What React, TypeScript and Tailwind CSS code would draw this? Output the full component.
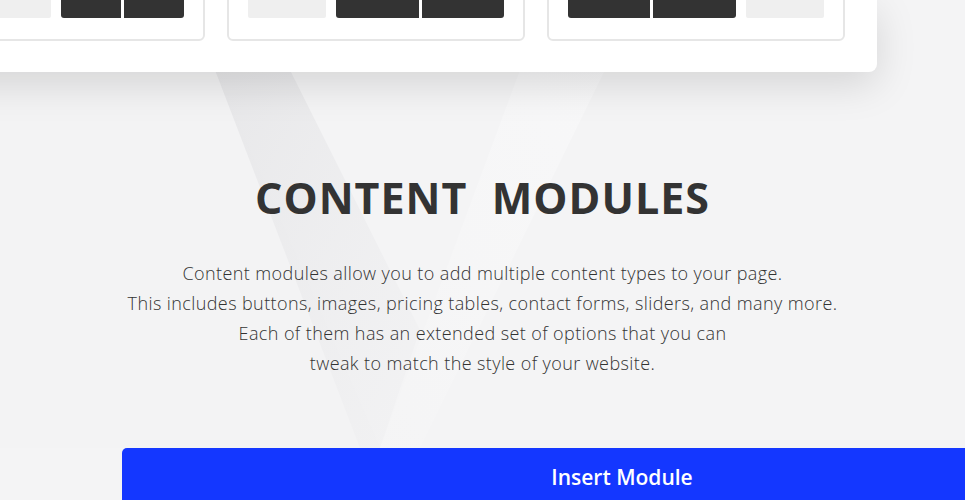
const cards = [
  { blocks: [["light", 123], ["dark", 60], ["dark", 60]] },
  { blocks: [["light", 78], ["dark", 83], ["dark", 82]] },
  { blocks: [["dark", 82], ["dark", 83], ["light", 78]] },
] as const;

function Card({ blocks }: { blocks: readonly (readonly [string, number])[] }) {
  return (
    <div className="flex h-[120px] w-[298px] items-end rounded-md border-2 border-[#e6e6e6] bg-white px-[19px] pb-[21px]">
      {blocks.map(([kind, w], i) => {
        const next = blocks[i + 1];
        const pairGap = next && kind === "dark" && next[0] === "dark" ? "mr-[3px]" : next ? "mr-[10px]" : "";
        return (
          <div
            key={i}
            style={{ width: w }}
            className={
              kind === "dark"
                ? `h-10 bg-[#333333] ${pairGap} ${blocks[i - 1]?.[0] === "dark" ? "rounded-br-[3px]" : "rounded-bl-[3px]"}`
                : `h-10 rounded-[2px] bg-[#efefef] ${pairGap}`
            }
          />
        );
      })}
    </div>
  );
}

// soft "V" shapes behind the section text
function Backdrop() {
  return (
    <svg className="pointer-events-none absolute inset-0 h-full w-full" viewBox="0 0 965 500" preserveAspectRatio="none">
      <defs>
        <linearGradient id="fadeL" x1="0" y1="0" x2="1" y2="1">
          <stop offset="0" stopColor="#e4e4e6" stopOpacity="0.8" />
          <stop offset="1" stopColor="#ebebed" stopOpacity="0.2" />
        </linearGradient>
        <linearGradient id="fadeR" x1="1" y1="0" x2="0" y2="1">
          <stop offset="0" stopColor="#f9f9fa" stopOpacity="0.7" />
          <stop offset="1" stopColor="#fafafa" stopOpacity="0.1" />
        </linearGradient>
      </defs>
      <polygon points="0,70 215,70 380,448 0,448" fill="#f2f2f3" opacity="0.6" />
      <polygon points="215,70 290,70 420,330 380,448 360,448" fill="url(#fadeL)" />
      <polygon points="520,70 605,70 420,448 380,448" fill="url(#fadeR)" />
    </svg>
  );
}

export default function App() {
  return (
    <div className="relative h-[500px] w-[965px] overflow-hidden bg-[#f4f4f5]">
      <Backdrop />

      <div className="relative z-10 -ml-[125px] flex h-[72px] w-[1002px] items-end gap-[22px] overflow-hidden rounded-br-lg bg-white px-8 pb-[31px] shadow-[0_12px_40px_rgba(0,0,0,0.13)]">
        {cards.map((c, i) => (
          <Card key={i} blocks={c.blocks} />
        ))}
      </div>

      <div className="relative z-10 flex flex-col items-center">
        <h2 className="mt-[100px] whitespace-pre text-[43px] font-bold leading-[52px] tracking-[1px] text-[#333333] [font-family:'Open_Sans',sans-serif]">
          CONTENT  MODULES
        </h2>
        <p className="mt-[34px] text-center text-[18px] font-light leading-[30px] tracking-[0.4px] text-[#333333] [font-family:'Open_Sans',sans-serif]">
          Content modules allow you to add multiple content types to your page.
          <br />
          This includes buttons, images, pricing tables, contact forms, sliders, and many more.
          <br />
          Each of them has an extended set of options that you can
          <br />
          tweak to match the style of your website.
        </p>
      </div>

      <div className="absolute left-[122px] top-[448px] z-10 flex h-[58px] w-[1000px] items-start justify-center rounded-tl-[5px] bg-[#1437ff] pt-[14px]">
        <span className="text-[21px] font-semibold text-white [font-family:'Open_Sans',sans-serif]">Insert Module</span>
      </div>
    </div>
  );
}
